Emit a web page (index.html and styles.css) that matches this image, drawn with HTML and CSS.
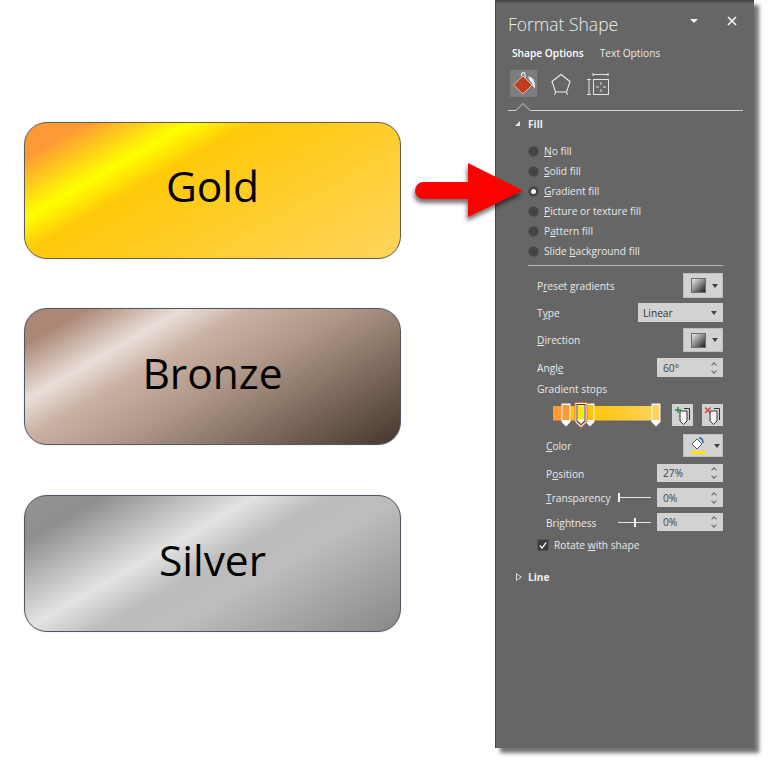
FILE: index.html
```html
<!DOCTYPE html>
<html lang="en">
<head>
<meta charset="utf-8">
<title>Format Shape</title>
<link rel="stylesheet" href="styles.css">
</head>
<body>
<div class="stage">
  <main class="canvas">
    <div class="shape gold">Gold</div>
    <div class="shape bronze">Bronze</div>
    <div class="shape silver">Silver</div>
  </main>
  <aside class="panel">
    <header class="title-row">
      <span class="title">Format Shape</span>
      <span class="caret-white"></span>
      <svg class="close" width="10" height="10" viewBox="0 0 10 10"><path d="M1 1L9 9M9 1L1 9" stroke="#f4f4f4" stroke-width="1.7" fill="none"/></svg>
    </header>
    <nav class="tabs"><b>Shape Options</b><span>Text Options</span></nav>
    <div class="icon-tabs">
      <span class="icon-tab active">
        <svg width="27" height="27" viewBox="0 0 27 27"><path d="M11.500 6V4.500c0-2.500 3.500-2.500 3.500 0V9" fill="none" stroke="#eee" stroke-width="1.200"/><path d="M13 6L22 15L13 24L3.500 15Z" fill="#c33b1c" stroke="#e8d8d4" stroke-width=".8"/><path d="M18 6.500c4 0 7 3.500 7 9v3l-2.500-3c0-2-1-3.500-2.500-4.500Z" fill="#f2f2f2"/></svg>
      </span>
      <span class="icon-tab">
        <svg width="24" height="24" viewBox="0 0 24 24"><path d="M12 2.500L21 9.500L17.500 20H6.500L3 9.500Z" fill="none" stroke="#ececec" stroke-width="1.100"/><path d="M6.500 20L5.500 23M17.500 20L18.500 23" stroke="#ececec" fill="none"/></svg>
      </span>
      <span class="icon-tab">
        <svg width="24" height="24" viewBox="0 0 24 24"><path d="M7 2.500H22M7 1V4M22 1V4M1 7.500H5M1 22.500H5M3 7.500V22.500" fill="none" stroke="#e4e4e4"/><rect x="7.500" y="7.500" width="15" height="15" fill="none" stroke="#e4e4e4"/><path d="M15 10V13M15 17V20M10 15H13M17 15H20" stroke="#e4e4e4" fill="none"/></svg>
      </span>
    </div>
    <div class="tab-rule"><svg width="235" height="9" viewBox="0 0 235 9"><path d="M0 8.500H8L15 1.500L22 8.500H235" fill="none" stroke="#cfcfcf"/></svg></div>
    <h2 class="section fill-head"><span class="tri-open"></span>Fill</h2>
    <ul class="radios">
      <li><i class="radio"></i><span><u>N</u>o fill</span></li>
      <li><i class="radio"></i><span><u>S</u>olid fill</span></li>
      <li><i class="radio on"></i><span><u>G</u>radient fill</span></li>
      <li><i class="radio"></i><span><u>P</u>icture or texture fill</span></li>
      <li><i class="radio"></i><span>P<u>a</u>ttern fill</span></li>
      <li><i class="radio"></i><span>Slide <u>b</u>ackground fill</span></li>
    </ul>
    <div class="rule"></div>
    <div class="rows">
      <div class="row r-preset"><label>P<u>r</u>eset gradients</label>
        <span class="btn"><i class="swatch"></i><i class="caret"></i></span></div>
      <div class="row r-type"><label>T<u>y</u>pe</label>
        <span class="select">Linear<i class="caret"></i></span></div>
      <div class="row r-dir"><label><u>D</u>irection</label>
        <span class="btn"><i class="swatch"></i><i class="caret"></i></span></div>
      <div class="row r-angle"><label>Angl<u>e</u></label>
        <span class="spin">60°<i class="arrows"></i></span></div>
      <div class="row r-stops"><label>Gradient stops</label></div>
      <div class="row r-track">
        <svg class="track" width="112" height="26" viewBox="0 0 112 26">
          <defs><linearGradient id="g"><stop offset="0" stop-color="#ff9a33"/><stop offset=".1" stop-color="#ff9a33"/><stop offset=".27" stop-color="#ffe600"/><stop offset=".37" stop-color="#ffc40c"/><stop offset="1" stop-color="#ffd35e"/></linearGradient></defs>
          <rect x="1" y="4" width="104" height="14.500" fill="url(#g)"/>
          <path d="M9.500 1.500H18.500V20L14 24.500L9.500 20Z" fill="#fff"/><rect x="10.500" y="3" width="7" height="15" fill="#fd9a35"/>
          <path d="M33.500 1.500H42.500V20L38 24.500L33.500 20Z" fill="#fff"/><rect x="34.500" y="3" width="7" height="15" fill="#ffc40c"/>
          <path d="M23 .5H35V20L29 25.500L23 20Z" fill="#fff" stroke="#e8682a"/><path d="M24.500 2H33.500V19.500L29 23.500L24.500 19.500Z" fill="#3c3c3c"/><path d="M25.500 3H32.500V18.500L29 22L25.500 18.500Z" fill="#fff"/><rect x="26" y="3.500" width="6" height="14" fill="#ffe800"/>
          <path d="M99.500 1.500H108.500V20L104 24.500L99.500 20Z" fill="#fff"/><rect x="100.500" y="3" width="7" height="15" fill="#ffd35e"/>
        </svg>
        <span class="stop-btn"><svg width="21" height="22" viewBox="0 0 21 22"><path d="M8 7H15V17L11.500 20.500L8 17Z" fill="#f6f6f6" stroke="#333"/><path d="M12 4.500H17.500V16" fill="none" stroke="#333"/><path d="M6 3V9M3 6H9" stroke="#1f8a45" stroke-width="1.300"/></svg></span>
        <span class="stop-btn"><svg width="21" height="22" viewBox="0 0 21 22"><path d="M8 7H15V17L11.500 20.500L8 17Z" fill="#f6f6f6" stroke="#333"/><path d="M12 4.500H17.500V16" fill="none" stroke="#333"/><path d="M3 3.500L8.500 9M8.500 3.500L3 9" stroke="#d23a2e" stroke-width="1.300"/></svg></span>
      </div>
      <div class="row r-color indent"><label><u>C</u>olor</label>
        <span class="btn color-btn"><svg width="16" height="19" viewBox="0 0 16 19"><path d="M7 3L12 8L7 13L2 8Z" fill="#fff" stroke="#333" stroke-width=".8"/><path d="M9 2c2.500 0 4 2 4 5" stroke="#2f5fa8" stroke-width="1.500" fill="none"/><rect x="1" y="15" width="14" height="3" fill="#ffe800"/></svg><i class="caret"></i></span></div>
      <div class="row r-pos indent"><label>P<u>o</u>sition</label>
        <span class="spin">27%<i class="arrows"></i></span></div>
      <div class="row r-trans indent"><label><u>T</u>ransparency</label>
        <span class="ctl"><i class="slider s-start"></i><span class="spin">0%<i class="arrows"></i></span></span></div>
      <div class="row r-bright indent"><label>Bri<u>g</u>htness</label>
        <span class="ctl"><i class="slider s-mid"></i><span class="spin">0%<i class="arrows"></i></span></span></div>
      <div class="check-row"><i class="check"><svg width="11" height="11" viewBox="0 0 11 11"><path d="M2 5.500L4.500 8.500L9 2" fill="none" stroke="#f2f2f2" stroke-width="1.500"/></svg></i><span>Rotate <u>w</u>ith shape</span></div>
    </div>
    <h2 class="section line-head"><span class="tri-closed"></span>Line</h2>
  </aside>
  <svg class="arrow" width="118" height="66" viewBox="0 0 118 66">
    <path d="M9.500 21H54V2L109 29.500L54 56V38H9.500A8.500 8.500 0 0 1 9.500 21Z" fill="#ff0000"/>
  </svg>
</div>
</body>
</html>
```
FILE: styles.css
```css
* { box-sizing: border-box; }
html, body { margin: 0; padding: 0; background: #fff; }
body { font-family: "Open Sans", "Noto Sans", sans-serif; overflow: hidden; }
.stage { position: relative; display: flex; width: 768px; height: 762px; }

.canvas { width: 495px; padding: 122px 0 0 24px; display: flex; flex-direction: column; gap: 49.400px; }
.shape {
  width: 377px; height: 137px; border-radius: 23px; border: 1px solid #4f5762;
  box-shadow: 0 0 1px rgba(80,90,100,.5);
  display: flex; align-items: center; justify-content: center;
  font-size: 42.500px; color: #000; line-height: 1; padding-bottom: 9px;
}
.gold { background: linear-gradient(150deg, #fd9a35 0%, #fd9a35 10%, #ffff00 27%, #ffc90a 37%, #ffd45e 100%); border-color: #5f5f50; }
.bronze { background: linear-gradient(150deg, #ac8775 0%, #ac8775 10%, #e9dfd9 26%, #c9b0a2 37%, #b29a8b 52%, #46362c 100%); padding-bottom: 8px; }
.silver { background: linear-gradient(150deg, #939393 0%, #8f8f8f 13%, #e3e3e3 38%, #bcbcbc 50%, #bdbdbd 62%, #888888 100%); padding-bottom: 6px; }

.panel {
  width: 259px; height: 748px; background: #666; color: #e9e9e9; font-size: 10.200px;
  box-shadow: 5px 5px 4px rgba(0,0,0,.55), inset 1px 0 0 #484848, inset 0 3px 2px -1px rgba(0,0,0,.35);
  display: flex; flex-direction: column;
}
.title-row { height: 44px; padding: 12px 0 0 13px; display: flex; align-items: flex-start; }
.title { font-size: 17.500px; font-weight: 300; line-height: 24px; color: #efefef; width: 182px; }
.caret-white { width: 0; height: 0; margin-top: 7px; border: 4px solid transparent; border-top: 4px solid #f2f2f2; border-bottom: 0; }
.close { margin: 4px 0 0 29px; }
.tabs { height: 18px; padding-left: 17px; display: flex; gap: 16px; line-height: 18px; }
.tabs b { color: #fff; font-weight: 600; }
.icon-tabs { margin-top: 8px; padding-left: 15px; display: flex; gap: 10px; height: 27px; }
.icon-tab { width: 27px; height: 27px; display: flex; align-items: center; justify-content: center; }
.icon-tab.active { background: #7d7d7d; }
.tab-rule { height: 9px; margin: 5px 0 0 13px; display: flex; }
.section { margin: 0; font-size: 10.200px; font-weight: 700; color: #eee; line-height: 14px; position: relative; padding-left: 33px; }
.fill-head { margin-top: 6px; }
.tri-open { position: absolute; left: 20px; top: 4px; width: 0; height: 0; border-style: solid; border-width: 0 0 5px 5px; border-color: transparent transparent #e4e4e4 transparent; }
.tri-closed { position: absolute; left: 21px; top: 3px; width: 6px; height: 8px; }
.tri-closed::before { content: ""; position: absolute; inset: 0; background: #e4e4e4; clip-path: polygon(0 0, 100% 50%, 0 100%, 0 0, 1px 1.500px, 1px 6.500px, 4.500px 4px, 1px 1.500px); }
.line-head { margin-top: 16px; }

.radios { list-style: none; margin: 10px 0 0; padding: 0 0 0 33px; display: flex; flex-direction: column; }
.radios li { height: 20px; display: flex; align-items: center; gap: 5px; }
.radio { width: 11px; height: 11px; border-radius: 50%; background: #434343; border: 1px solid #555; flex: none; position: relative; }
.radio.on::after { content: ""; position: absolute; left: 2px; top: 2px; width: 5px; height: 5px; border-radius: 50%; background: #fff; }
.rule { height: 1px; background: #b9b9b9; margin: 4px 31px 0 33px; }
.rows { padding: 7px 31px 0 42px; display: flex; flex-direction: column; }
.row { display: flex; justify-content: space-between; align-items: center; }
.indent { padding-left: 9px; }
.indent label { padding-top: 1px; }
.r-preset { height: 25px; }
.r-type { height: 19px; margin-top: 5px; }
.r-dir { height: 24px; margin-top: 6px; }
.r-angle { height: 19px; margin-top: 6px; }
.r-stops { height: 18px; margin-top: 3px; }
.r-track { height: 26px; margin: 4px 0 0 15px; justify-content: flex-start; }
.r-color { height: 23px; margin-top: 6px; }
.r-pos { height: 18px; margin-top: 7px; }
.r-trans { height: 19px; margin-top: 6px; }
.r-bright { height: 18px; margin-top: 6px; }
.btn { width: 40px; height: 100%; background: #d2d2d2; display: flex; align-items: center; padding-left: 8px; gap: 6px; box-shadow: inset 0 0 0 1px #bdbdbd; }
.swatch { width: 15px; height: 15px; background: linear-gradient(135deg, #e8e8e8, #8a8a8a 50%, #1f1f1f); border: 1px solid #6c6c6c; flex: none; }
.caret { width: 0; height: 0; border-style: solid; border-width: 4px 3.500px 0; border-color: #444 transparent transparent; flex: none; }
.color-btn { padding-left: 7px; gap: 8px; }
.select { width: 85px; height: 100%; background: #d2d2d2; color: #333; display: flex; align-items: center; justify-content: space-between; padding: 0 6px 0 5px; }
.spin { width: 66px; height: 100%; background: #d2d2d2; color: #444; display: flex; align-items: center; justify-content: space-between; padding: 0 6px 0 6px; }
.arrows { width: 7px; height: 14px; position: relative; flex: none; }
.arrows::before, .arrows::after { content: ""; position: absolute; left: 2px; width: 3px; height: 3px; border-left: 1px solid #666; border-top: 1px solid #666; }
.arrows::before { top: 2px; transform: rotate(45deg); }
.arrows::after { bottom: 2px; transform: rotate(225deg); }
.ctl { display: flex; align-items: center; gap: 6px; height: 100%; }
.slider { display: block; width: 33px; height: 1px; background: #e6e6e6; position: relative; }
.slider::after { content: ""; position: absolute; top: -4px; width: 1.500px; height: 9px; background: #f0f0f0; }
.s-start::after { left: 0; }
.s-mid::after { left: 16px; }
.track { flex: none; margin-right: 8px; }
.stop-btn { width: 21px; height: 22px; background: #d2d2d2; margin-right: 9px; display: flex; flex: none; }
.stop-btn:last-child { margin-right: 0; }
.check-row { display: flex; align-items: center; gap: 5px; height: 18px; margin-top: 5px; }
.check { width: 12px; height: 12px; background: #3b3b3b; border: 1px solid #565656; display: flex; align-items: center; justify-content: center; flex: none; }

.arrow { position: absolute; left: 414px; top: 161px; filter: drop-shadow(-1px 4px 2px rgba(0,0,0,.55)); }
```
